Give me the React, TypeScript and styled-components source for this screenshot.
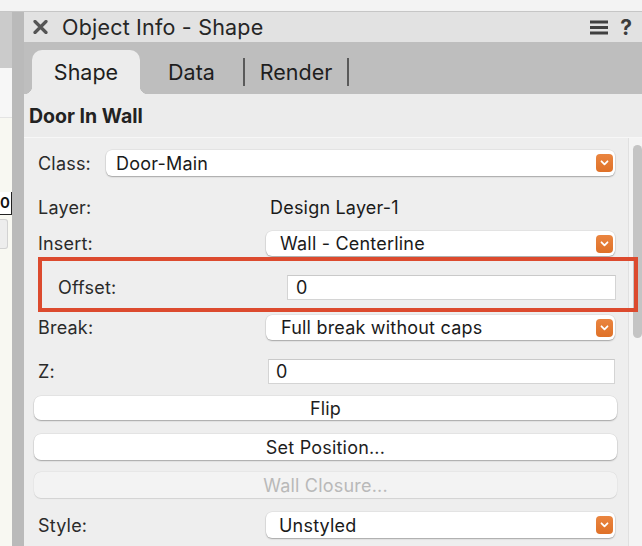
import React from 'react';
import styled, { createGlobalStyle } from 'styled-components';

const Global = createGlobalStyle`
  html, body { margin: 0; padding: 0; width: 642px; height: 546px; overflow: hidden; background: #f3f3f3; }
  body { font-family: Inter, "Noto Sans", "Liberation Sans", sans-serif; -webkit-font-smoothing: antialiased; }
  * { box-sizing: border-box; }
`;

const Screen = styled.div`
  width: 642px;
  height: 546px;
  display: flex;
  flex-direction: column;
  overflow: hidden;
`;

const TopStrip = styled.div`
  flex: none;
  height: 12px;
  background: #f3f3f3;
  border-bottom: 1px solid #c6c6c6;
`;

const Main = styled.div`
  flex: 1;
  display: flex;
  min-height: 0;
`;

const LeftApp = styled.div`
  flex: none;
  width: 12px;
  display: flex;
  flex-direction: column;
  background: #f8f8f2;
  overflow: hidden;
`;

const LeftToolbar = styled.div`
  height: 56px;
  background: #cbcbcb;
`;

const LeftSheet = styled.div`
  height: 50px;
  background: #f7f7f7;
  border-bottom: 1px solid #e4e4e4;
`;

const LeftField = styled.div`
  margin-top: 74px;
  width: 12px;
  height: 23px;
  background: #fff;
  border-right: 1px solid #222;
  border-bottom: 1px solid #222;
  font-size: 15px;
  font-weight: 600;
  line-height: 22px;
  color: #111;
  text-align: right;
  padding-right: 1px;
`;

const LeftButton = styled.div`
  margin-top: 4px;
  width: 8px;
  height: 30px;
  background: #ededed;
  border: 1px solid #d2d2d2;
  border-left: none;
  border-radius: 0 3px 3px 0;
`;

const Divider = styled.div`
  flex: none;
  width: 12px;
  background: #bababa;
`;

const Panel = styled.div`
  flex: 1;
  min-width: 0;
  display: flex;
  flex-direction: column;
  background: #ececec;
`;

const TitleBar = styled.div`
  flex: none;
  height: 30px;
  background: #e2e2e2;
  display: flex;
  align-items: center;
  padding: 0 10px 0 9px;
  gap: 14px;
`;

const Title = styled.span`
  font-size: 21.5px;
  color: #262626;
  letter-spacing: 0.2px;
`;

const TitleIcons = styled.div`
  margin-left: auto;
  display: flex;
  align-items: center;
  gap: 12px;
`;

const Help = styled.span`
  font-size: 21px;
  font-weight: 700;
  color: #3c3c3c;
  line-height: 1;
`;

const TabBar = styled.div`
  flex: none;
  height: 52px;
  background: #bebebe;
  display: flex;
  align-items: flex-end;
  padding-left: 8px;
`;

const Tab = styled.div<{ $active?: boolean; $w: number }>`
  position: relative;
  width: ${p => p.$w}px;
  height: 44px;
  display: flex;
  align-items: center;
  justify-content: center;
  font-size: 21.5px;
  color: #1e1e1e;
  background: ${p => (p.$active ? '#ececec' : 'transparent')};
  border-radius: ${p => (p.$active ? '10px 10px 0 0' : '0')};
  ${p =>
    p.$active
      ? `
    &::before, &::after {
      content: '';
      position: absolute;
      bottom: 0;
      width: 8px;
      height: 8px;
    }
    &::before {
      left: -8px;
      background: radial-gradient(circle at 0 0, transparent 8px, #ececec 8.5px);
    }
    &::after {
      right: -8px;
      background: radial-gradient(circle at 100% 0, transparent 8px, #ececec 8.5px);
    }
  `
      : ''}
`;

const TabSep = styled.div`
  align-self: flex-end;
  margin-bottom: 8px;
  width: 2px;
  height: 28px;
  background: #5a5a5a;
`;

const SectionHeader = styled.div`
  flex: none;
  height: 43px;
  display: flex;
  align-items: center;
  padding-left: 5px;
  font-size: 19.5px;
  font-weight: 700;
  color: #222;
`;

const Body = styled.div`
  flex: 1;
  display: flex;
  min-height: 0;
  border-top: 1px solid #f7f7f7;
`;

const Content = styled.div`
  flex: 1;
  display: flex;
  flex-direction: column;
  padding: 12px 11px 0 10px;
  background: #eeeeee;
`;

const ScrollTrack = styled.div`
  flex: none;
  width: 14px;
  background: #f4f4f4;
  border-left: 1px solid #e0e0e0;
  padding: 7px 0 0 4px;
`;

const ScrollThumb = styled.div`
  width: 9px;
  height: 193px;
  border-radius: 5px;
  background: #c4c4c4;
`;

const Row = styled.div<{ $h: number; $mt: number; $indent?: number }>`
  position: relative;
  flex: none;
  display: flex;
  align-items: center;
  height: ${p => p.$h}px;
  margin-top: ${p => p.$mt}px;
  padding-left: ${p => p.$indent ?? 0}px;
`;

const Label = styled.div<{ $w: number }>`
  flex: none;
  width: ${p => p.$w}px;
  padding-left: 4px;
  font-size: 18px;
  letter-spacing: 0.2px;
  color: #2a2a2a;
`;

const Value = styled.div`
  font-size: 18px;
  letter-spacing: 0.2px;
  color: #1a1a1a;
`;

const Select = styled.div<{ $pad: number }>`
  flex: 1;
  height: 100%;
  margin-right: 2px;
  display: flex;
  align-items: center;
  padding: 0 2px 0 ${p => p.$pad}px;
  background: #fff;
  border-radius: 6px;
  box-shadow: 0 1px 1.5px rgba(0, 0, 0, 0.28), 0 0 0 0.5px rgba(0, 0, 0, 0.08);
  font-size: 18px;
  letter-spacing: 0.2px;
  color: #1a1a1a;
`;

const SelectText = styled.span`
  flex: 1;
`;

const Chevron = styled.div`
  flex: none;
  width: 17px;
  height: 18px;
  border-radius: 4px;
  background: linear-gradient(#ea8540, #df7128);
  display: flex;
  align-items: center;
  justify-content: center;
`;

const Input = styled.div<{ $pad: number; $mr: number }>`
  flex: 1;
  height: 100%;
  margin-right: ${p => p.$mr}px;
  display: flex;
  align-items: center;
  padding-left: ${p => p.$pad}px;
  background: #fff;
  border: 1px solid #d4d4d4;
  border-top-color: #c9c9c9;
  font-size: 18px;
  color: #1a1a1a;
`;

const Button = styled.div<{ $h: number; $mt: number; $disabled?: boolean }>`
  flex: none;
  height: ${p => p.$h}px;
  margin-top: ${p => p.$mt}px;
  display: flex;
  align-items: center;
  justify-content: center;
  border-radius: 7px;
  font-size: 18px;
  letter-spacing: 0.2px;
  color: ${p => (p.$disabled ? '#b9b9b9' : '#1e1e1e')};
  background: ${p => (p.$disabled ? '#f3f3f3' : '#ffffff')};
  box-shadow: ${p =>
    p.$disabled
      ? '0 0.5px 1px rgba(0,0,0,0.1), 0 0 0 0.5px rgba(0,0,0,0.04)'
      : '0 1px 1.5px rgba(0,0,0,0.28), 0 0 0 0.5px rgba(0,0,0,0.08)'};
`;

const Highlight = styled.div`
  position: absolute;
  top: -18px;
  bottom: -12px;
  left: 4px;
  right: -21px;
  border: 4px solid #dc4a2e;
  pointer-events: none;
`;

const CloseIcon = () => (
  <svg width="15" height="14" viewBox="0 0 15 14">
    <path d="M2 1.5 L13 12.5 M13 1.5 L2 12.5" stroke="#555" strokeWidth="3.2" strokeLinecap="round" />
  </svg>
);

const MenuIcon = () => (
  <svg width="18" height="15" viewBox="0 0 18 15">
    <rect x="0" y="0.5" width="18" height="3" fill="#404040" />
    <rect x="0" y="6" width="18" height="3" fill="#404040" />
    <rect x="0" y="11.5" width="18" height="3" fill="#404040" />
  </svg>
);

const ChevronDown = () => (
  <svg width="9" height="6" viewBox="0 0 9 6">
    <path d="M1.5 1.3 L4.5 4.3 L7.5 1.3" fill="none" stroke="#fff" strokeWidth="1.8" strokeLinecap="round" strokeLinejoin="round" />
  </svg>
);

const Dropdown = ({ text, pad }: { text: string; pad: number }) => (
  <Select $pad={pad}>
    <SelectText>{text}</SelectText>
    <Chevron>
      <ChevronDown />
    </Chevron>
  </Select>
);

export default function App() {
  return (
    <Screen>
      <Global />
      <TopStrip />
      <Main>
        <LeftApp>
          <LeftToolbar />
          <LeftSheet />
          <LeftField>0</LeftField>
          <LeftButton />
        </LeftApp>
        <Divider />
        <Panel>
          <TitleBar>
            <CloseIcon />
            <Title>Object Info - Shape</Title>
            <TitleIcons>
              <MenuIcon />
              <Help>?</Help>
            </TitleIcons>
          </TitleBar>
          <TabBar>
            <Tab $active $w={108}>Shape</Tab>
            <Tab $w={103}>Data</Tab>
            <TabSep />
            <Tab $w={102}>Render</Tab>
            <TabSep />
          </TabBar>
          <SectionHeader>Door In Wall</SectionHeader>
          <Body>
            <Content>
              <Row $h={26} $mt={0}>
                <Label $w={72}>Class:</Label>
                <Dropdown text="Door-Main" pad={10} />
              </Row>
              <Row $h={26} $mt={18}>
                <Label $w={236}>Layer:</Label>
                <Value>Design Layer-1</Value>
              </Row>
              <Row $h={25} $mt={11}>
                <Label $w={232}>Insert:</Label>
                <Dropdown text="Wall - Centerline" pad={14} />
              </Row>
              <Row $h={25} $mt={19} $indent={20}>
                <Label $w={233}>Offset:</Label>
                <Input $pad={8} $mr={1}>0</Input>
                <Highlight />
              </Row>
              <Row $h={25} $mt={15}>
                <Label $w={232}>Break:</Label>
                <Dropdown text="Full break without caps" pad={15} />
              </Row>
              <Row $h={25} $mt={19}>
                <Label $w={234}>Z:</Label>
                <Input $pad={7} $mr={2}>0</Input>
              </Row>
              <Button $h={24} $mt={12}>Flip</Button>
              <Button $h={26} $mt={14}>Set Position...</Button>
              <Button $h={26} $mt={12} $disabled>Wall Closure...</Button>
              <Row $h={26} $mt={14}>
                <Label $w={232}>Style:</Label>
                <Dropdown text="Unstyled" pad={13} />
              </Row>
            </Content>
            <ScrollTrack>
              <ScrollThumb />
            </ScrollTrack>
          </Body>
        </Panel>
      </Main>
    </Screen>
  );
}
